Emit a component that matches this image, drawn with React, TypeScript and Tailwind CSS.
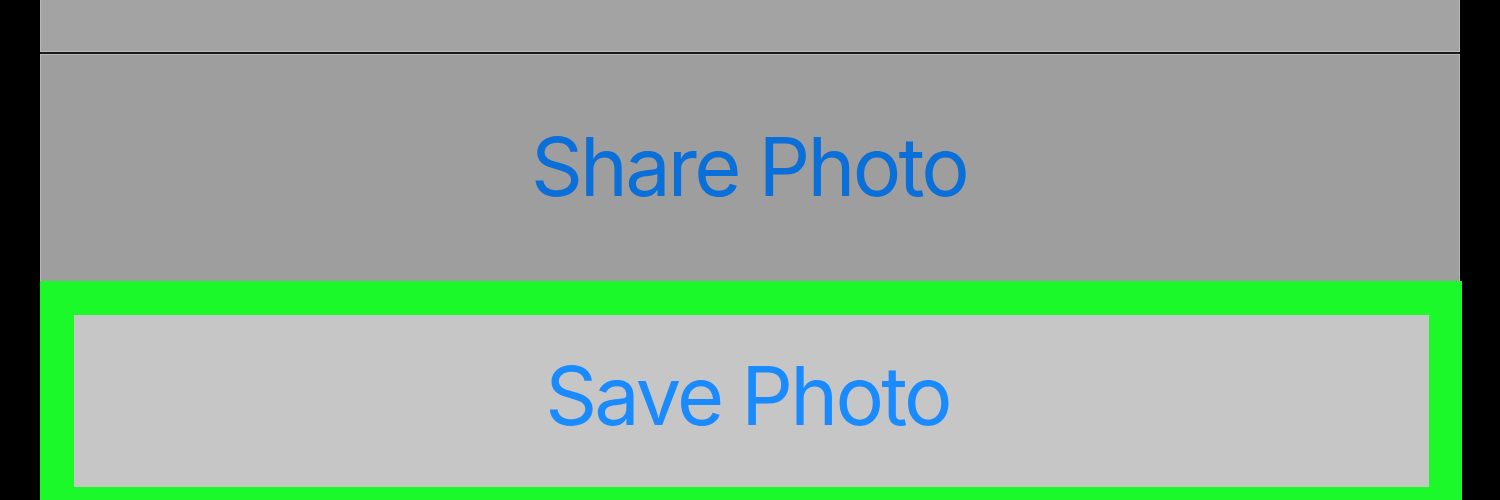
export default function App() {
  return (
    <div className="h-[500px] w-[1500px] overflow-hidden bg-black" style={{ fontFamily: 'Inter, "Liberation Sans", sans-serif' }}>
      <div className="ml-[40px] flex w-[1422px] flex-col">
        {/* previous option, cut off at top */}
        <div className="mr-[2px] h-[52px] border-x border-b border-[#c8c8c8]/60 bg-[#a3a3a3]" />
        <div className="mr-[2px] h-[2px] bg-[#1a1a1a]" />
        <div className="mr-[2px] flex h-[227px] items-center justify-center border-x border-t border-[#c8c8c8]/60 bg-[#9e9e9e] pr-[2px]">
          <span className="pb-[2px] text-[81px] leading-none tracking-[-2.8px] text-[#0a6fd8]">Share Photo</span>
        </div>
        {/* highlighted option */}
        <div className="h-[219px] bg-[#1cf92b] pt-[34px] pr-[33px] pl-[34px]">
          <div className="flex h-[172px] items-start justify-center bg-[#c6c6c6] pt-[41px] pr-[8px]">
            <span className="text-[81px] leading-none tracking-[-2.8px] text-[#1a8bff]">Save Photo</span>
          </div>
        </div>
      </div>
    </div>
  );
}
